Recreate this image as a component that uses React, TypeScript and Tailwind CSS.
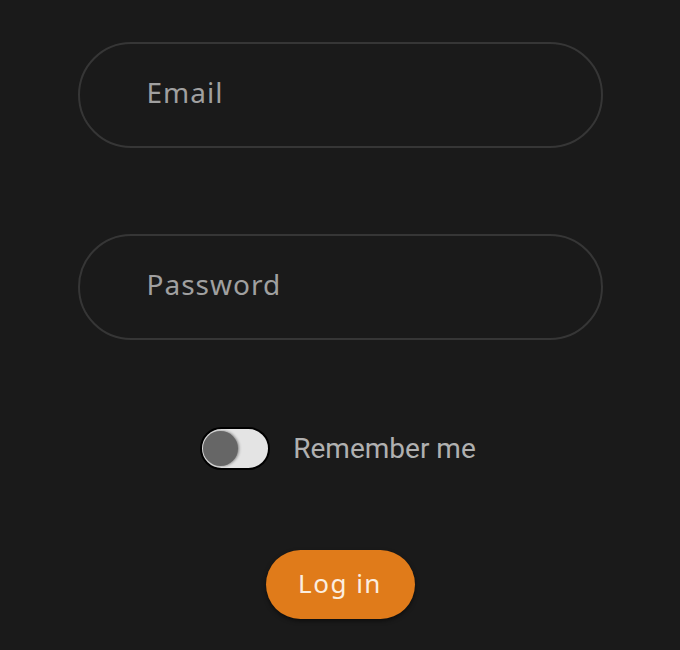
import { useState } from "react";

// Simple dark login form: two pill inputs, a remember switch and the submit button.
export default function App() {
  const [remember, setRemember] = useState(false);

  return (
    <div className="min-h-[650px] w-full bg-[#1a1a1a] flex flex-col items-center pt-[42px] font-['Noto_Sans','Lato',sans-serif]">
      <input
        type="email"
        placeholder="Email"
        className="w-[525px] h-[106px] rounded-full border-2 border-[#363636] bg-transparent pl-[67px] pb-[6px] text-[28px] tracking-[1px] text-[#bdbdbd] placeholder:text-[#a0a0a0] outline-none"
      />
      <input
        type="password"
        placeholder="Password"
        className="mt-[86px] w-[525px] h-[106px] rounded-full border-2 border-[#363636] bg-transparent pl-[67px] pb-[6px] text-[28px] tracking-[1px] text-[#bdbdbd] placeholder:text-[#a0a0a0] outline-none"
      />

      <div className="mt-[87px] flex items-center gap-[23px] -ml-[4px]">
        <button
          role="switch"
          aria-checked={remember}
          onClick={() => setRemember((r) => !r)}
          className="relative w-[70px] h-[43px] rounded-full bg-[#e4e4e4] border-2 border-black"
        >
          <span
            className={
              "absolute top-[2px] w-[35px] h-[35px] rounded-full bg-[#666666] shadow-[1px_0_3px_rgba(0,0,0,0.45)] transition-all " +
              (remember ? "left-[29px]" : "left-[1px]")
            }
          />
        </button>
        <span className="font-['Roboto',sans-serif] text-[28px] text-[#b0b0b0]">Remember me</span>
      </div>

      <button className="mt-[80px] w-[149px] h-[69px] rounded-full bg-[#e07b1a] pb-[2px] text-[26px] tracking-[1.5px] text-[#fbeee0] shadow-[0_2px_4px_rgba(0,0,0,0.5)]">
        Log in
      </button>
    </div>
  );
}
